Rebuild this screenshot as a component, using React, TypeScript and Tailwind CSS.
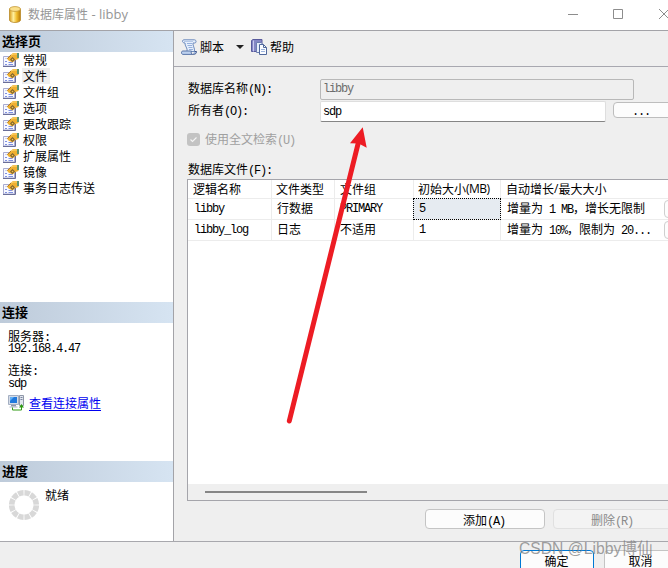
import type { ReactNode } from "react";

const PAGES = ["常规", "文件", "文件组", "选项", "更改跟踪", "权限", "扩展属性", "镜像", "事务日志传送"];

const GRID = "grid shrink-0 grid-cols-[84px_63px_79px_87px_1fr]";

type FileRow = { name: string; type: string; group: string; size: string; growth: string };

const FILES: FileRow[] = [
  { name: "libby", type: "行数据", group: "PRIMARY", size: "5", growth: "增量为 1 MB，增长无限制" },
  { name: "libby_log", type: "日志", group: "不适用", size: "1", growth: "增量为 10%，限制为 20..." },
];

// Latin runs take half the width of a Chinese character
function T({ children }: { children: string }) {
  const runs = children.match(/[\x20-\x7e]+|[^\x20-\x7e]+/g) ?? [];
  return (
    <span className="whitespace-pre">
      {runs.map((run, i) =>
        /^[\x20-\x7e]/.test(run) ? (
          <span key={i} className="font-['Liberation_Mono',monospace] tracking-[-1.2px]">
            {run}
          </span>
        ) : (
          <span key={i}>{run}</span>
        ),
      )}
    </span>
  );
}

function PageIcon() {
  return (
    <svg width="16" height="16" viewBox="0 0 16 16" className="shrink-0">
      <path d="M.5 4.500h11v9.500H.5z" fill="#f8f9ff" stroke="#a9acd2" />
      <path d="M0 14.500h12.500V8" fill="none" stroke="#6a6e98" />
      <path d="M2 9.500h2M2 12.500h2M5.500 12.500h4.500M5.500 10.500h4" stroke="#7f90e0" />
      <path d="M2 6.500h3" stroke="#cdd2ee" />
      <path d="M4 6.500 8 2.500l2-1.500h4.500l1 1v5l-3 1-3 2.500L5.500 8.500z" fill="#efb030" />
      <path d="m7.500 3.500 2.500-1.500h4" stroke="#ffd976" fill="none" />
      <path d="M4.500 6.500 8 3" stroke="#b07a28" fill="none" />
      <path d="M14 1h2v5h-2z" fill="#5d9470" />
      <path d="m9.500 5 2.500 2.500-2.500 2.500L7 7.500z" fill="#7a6130" />
      <path d="m9.500 6.500 1 1-1 1-1-1z" fill="#f6c443" />
    </svg>
  );
}

function DatabaseIcon() {
  return (
    <svg width="12" height="17" viewBox="0 0 12 17">
      <defs>
        <linearGradient id="gold">
          <stop offset="0" stopColor="#d79a1c" />
          <stop offset=".35" stopColor="#fff0a0" />
          <stop offset=".65" stopColor="#f0bc2e" />
          <stop offset="1" stopColor="#b87908" />
        </linearGradient>
      </defs>
      <path d="M.5 3v11c0 1.400 2.500 2.500 5.500 2.500s5.500-1.100 5.500-2.500V3z" fill="url(#gold)" stroke="#b98a2a" strokeWidth=".8" />
      <ellipse cx="6" cy="3" rx="5.500" ry="2.400" fill="#fbe08a" stroke="#c49838" strokeWidth=".8" />
    </svg>
  );
}

function ScriptIcon() {
  return (
    <svg width="17" height="16" viewBox="0 0 17 16">
      <path d="M3 .8h10.500c2 0 2 3.200.3 3.200H12c-.5 2.500 2 5 1.500 8.500H6C7 9 3.500 7 4 4 .8 4 .8.800 3 .800z" fill="#e6effc" stroke="#6d8bbd" />
      <path d="M1.800 12h8.700c-.8 1.200-.3 3 1 3.400H2C0 15.400 0 12 1.800 12z" fill="#bcd0ee" stroke="#5a76a8" />
      <path d="M11.500 15.400c3.500 0 4-1.400 4-2.900h-2" fill="#a7bde2" stroke="#3c558a" />
      <path d="M6 4.500h5M6.500 6.500h4.500M7.500 8.500h4M8 10.500h4" stroke="#94afdc" />
      <path d="M3 2.500h9" stroke="#b4c8e8" />
    </svg>
  );
}

function HelpIcon() {
  return (
    <svg width="17" height="16" viewBox="0 0 17 16">
      <path d="M.5 1.500 2 .5h9v12H.5z" fill="#8587c4" stroke="#585a9c" />
      <path d="M2.500 1.500v11" stroke="#c9cbf0" />
      <path d="M5.500 3.500h4.500l2 2v8H5.500z" fill="#e7eefb" stroke="#6d7fb0" />
      <path d="M8.500 5.500h4l3 3v7h-7z" fill="#fafcff" stroke="#50689c" />
      <path d="M12.500 5.500v3h3" fill="none" stroke="#50689c" />
      <path d="M10 10.500h4M10 12.500h4" stroke="#9db4dd" />
    </svg>
  );
}

function ConnectionIcon() {
  return (
    <svg width="17" height="16" viewBox="0 0 17 16" className="shrink-0">
      <path d="M.5.5h10v9H.5z" fill="#d5dce8" stroke="#a4afc2" />
      <path d="M2 2h7v6H2z" fill="#1f78dc" />
      <path d="M2 2h4L2 6z" fill="#65b1f5" />
      <path d="M3 10h5v1.500H3z" fill="#8f99ab" />
      <path d="M1.500 12h8" stroke="#aeb7c6" />
      <path d="M11.500.500h4v10h-4z" fill="#e2e6ee" stroke="#9098a8" />
      <path d="M12.500 2.500h2M12.500 4.500h2" stroke="#7884a0" />
      <path d="M4.500 12.500v2.500h9v-3" fill="none" stroke="#2f9a12" />
      <path d="m11 12.500 2.500-3.500 2.500 3.500z" fill="#2f9a12" />
    </svg>
  );
}

function Spinner() {
  return (
    <svg width="32" height="32" viewBox="0 0 32 32">
      <circle cx="16" cy="16" r="12.300" fill="none" stroke="#d8d8d8" strokeWidth="5.600" pathLength="120" strokeDasharray="8.600 1.400" strokeDashoffset="-.7" />
    </svg>
  );
}

function SectionHeader({ children }: { children: ReactNode }) {
  return (
    <div className="flex h-[21px] shrink-0 items-center bg-linear-to-r from-[#becbda] to-[#d6e4f2] pb-[3px] pl-[2px] text-[13px] font-bold leading-none">
      {children}
    </div>
  );
}

function Sidebar() {
  return (
    <aside className="flex w-[174px] shrink-0 flex-col border-r border-[#a3a3a8] bg-white">
      <SectionHeader>选择页</SectionHeader>
      <ul className="h-[250px] pl-[3px]">
        {PAGES.map((page, i) => (
          <li key={page} className="flex h-4 items-center gap-[3px]">
            <PageIcon />
            <span className={`flex h-4 items-center pl-px pr-[3px] ${i === 1 ? "bg-[#efefef]" : ""}`}>{page}</span>
          </li>
        ))}
      </ul>
      <SectionHeader>连接</SectionHeader>
      <div className="flex h-[138px] flex-col pl-2 pt-[7px] leading-3">
        <div className="h-[11px]"><T>服务器:</T></div>
        <div className="h-3"><T>192.168.4.47</T></div>
        <div className="mt-[11px] h-3"><T>连接:</T></div>
        <div className="h-3"><T>sdp</T></div>
        <div className="mt-[7px] flex items-center gap-1">
          <ConnectionIcon />
          <a className="text-[#0000f0] underline underline-offset-2">查看连接属性</a>
        </div>
      </div>
      <SectionHeader>进度</SectionHeader>
      <div className="flex gap-[5px] pl-2 pt-[7px]">
        <Spinner />
        <span className="leading-[11px]">就绪</span>
      </div>
    </aside>
  );
}

function Toolbar() {
  return (
    <div className="flex h-9 shrink-0 items-center border-b border-[#a8a8b0] pb-[3px] pl-[7px]">
      <ScriptIcon />
      <span className="ml-[2px]">脚本</span>
      <span className="ml-3 border-x-4 border-t-4 border-x-transparent border-t-[#222]" />
      <span className="ml-[7px]">
        <HelpIcon />
      </span>
      <span className="ml-[2px]">帮助</span>
    </div>
  );
}

function Cell({ children, className = "" }: { children: ReactNode; className?: string }) {
  return (
    <div className={`flex items-center overflow-hidden border-b border-r border-[#ececec] ${className}`}>
      {children}
    </div>
  );
}

function FilesTable() {
  return (
    <div className="flex h-[322px] w-[500px] flex-col border border-[#a5a5ab] bg-white">
      <div className={`${GRID} h-[19px]`}>
        <Cell className="pl-[5px]">逻辑名称</Cell>
        <Cell className="pl-1">文件类型</Cell>
        <Cell className="pl-[5px]">文件组</Cell>
        <Cell className="pl-1">
          初始大小<span className="font-['Open_Sans',sans-serif] tracking-[-0.5px]">(MB)</span>
        </Cell>
        <Cell className="pl-[5px]">
          自动增长<span className="font-['Open_Sans',sans-serif]">/</span>最大大小
        </Cell>
      </div>
      {FILES.map((file, i) => (
        <div key={file.name} className={`${GRID} h-[21px]`}>
          <Cell className="pb-[2px] pl-[6px]"><T>{file.name}</T></Cell>
          <Cell className="pb-[2px] pl-[5px]"><T>{file.type}</T></Cell>
          <Cell className="pb-[2px] pl-[5px]"><T>{file.group}</T></Cell>
          <Cell
            className={
              i === 0
                ? "-ml-px -mt-px bg-[#e6ebf1] pb-px pl-[6px] outline-1 -outline-offset-1 outline-dotted outline-black"
                : "pb-[2px] pl-[5px]"
            }
          >
            <T>{file.size}</T>
          </Cell>
          <Cell className="pl-[6px]">
            <div className="-mt-px w-[157px] shrink-0"><T>{file.growth}</T></div>
            <span className="h-[18px] w-6 shrink-0 rounded border border-[#cfcfcf] bg-[#fdfdfd]" />
          </Cell>
        </div>
      ))}
      <div className="mt-auto flex h-4 items-center bg-[#efefef] pl-[17px]">
        <div className="h-[2px] w-[162px] bg-[#868686]" />
      </div>
    </div>
  );
}

function DatabaseForm() {
  return (
    <div className="flex flex-col pl-[13px] pt-3">
      <div className="flex h-[22px]">
        <span className="w-[133px] shrink-0 pl-px leading-[17px]"><T>数据库名称(N):</T></span>
        <div className="h-[21px] w-[314px] shrink-0 rounded-xs border border-[#b8b8b8] pl-[2px] leading-[14px] text-[#6d6d6d]">
          <T>libby</T>
        </div>
      </div>
      <div className="flex h-[21px]">
        <span className="w-[133px] shrink-0 pl-px leading-[17px]"><T>所有者(O):</T></span>
        <div className="h-[21px] w-[286px] shrink-0 rounded-xs border border-[#dedede] border-b-[#858585] bg-white pl-[2px] leading-[16px]">
          <T>sdp</T>
        </div>
        <button className="ml-[7px] mt-px h-4 w-[60px] shrink-0 rounded border border-[#bdbdbd] bg-[#fcfcfc] pr-[4px] text-center leading-[13px]">
          <T>...</T>
        </button>
      </div>
      <div className="mt-[10px] flex h-[15px] items-center gap-[5px] text-[#a0a0a0]">
        <span className="flex size-[13px] items-center justify-center rounded-[3px] bg-[#c3c3c3]">
          <svg width="9" height="9" viewBox="0 0 9 9">
            <path d="m1.500 4.500 2 2L7.500 2.500" fill="none" stroke="#f4f4f4" strokeWidth="1.100" />
          </svg>
        </span>
        <T>使用全文检索(U)</T>
      </div>
      <div className="mt-[14px] h-[18px] pl-px leading-[15px]"><T>数据库文件(F):</T></div>
      <FilesTable />
      <div className="mt-2 flex gap-2 pl-[238px]">
        <button className="h-5 w-[120px] shrink-0 rounded border border-[#c4c4c4] bg-[#fcfcfc] pr-[2px] leading-[19px]">
          <T>添加(A)</T>
        </button>
        <button className="h-5 w-[120px] shrink-0 rounded border border-[#e0e0e0] bg-[#f3f3f3] pr-[2px] leading-[19px] text-[#8a8a8a]">
          <T>删除(R)</T>
        </button>
      </div>
    </div>
  );
}

function TitleBar() {
  return (
    <header className="flex h-[31px] shrink-0 items-center border-b border-[#a3a3a8] bg-white pb-[2px] pl-[9px] text-[#969696]">
      <DatabaseIcon />
      <span className="ml-[7px] whitespace-pre font-['Open_Sans','Noto_Sans_CJK_SC',sans-serif]">
        数据库属性<span className="text-[13px]"> - libby</span>
      </span>
      <svg width="106" height="12" viewBox="0 0 106 12" className="ml-auto shrink-0" fill="none" stroke="#8d8d8d">
        <path d="M6 6.500h10M51.500 1.500h9v9h-9zM97 1l10 10M107 1 97 11" />
      </svg>
    </header>
  );
}

export default function App() {
  return (
    <div className="relative flex h-[568px] w-[668px] flex-col overflow-hidden bg-[#efefef] font-['Noto_Sans_CJK_SC',sans-serif] text-xs leading-4 text-black">
      <TitleBar />
      <div className="flex h-[510px] shrink-0">
        <Sidebar />
        <main className="min-w-0 flex-1 overflow-hidden">
          <Toolbar />
          <DatabaseForm />
        </main>
      </div>
      <footer className="flex h-[60px] shrink-0 items-start gap-[10px] border-t border-[#a8a8ad] pl-[520px] pt-2">
        <button className="h-6 w-[74px] shrink-0 rounded border border-[#0078d4] bg-[#fcfcfc] pb-[3px] pr-px">确定</button>
        <button className="h-6 w-[74px] shrink-0 rounded border border-[#c4c4c4] bg-[#fcfcfc] pb-[3px] pr-px">取消</button>
      </footer>

      {/* red pointer towards the owner field */}
      <svg className="pointer-events-none absolute left-0 top-0" width="668" height="568" viewBox="0 0 668 568">
        <path d="M289.300 421 358.500 142" stroke="#ed1c24" strokeWidth="5" strokeLinecap="round" />
        <path d="m362.700 127.300 4 20.500-8-4.300-8.700-.2z" fill="#ed1c24" />
      </svg>
      <span className="absolute left-[519px] top-[539px] whitespace-nowrap font-['Liberation_Sans','Noto_Sans_CJK_SC',sans-serif] text-[15.700px] leading-5 text-[#777]/70">
        CSDN @Libby博仙
      </span>
    </div>
  );
}
